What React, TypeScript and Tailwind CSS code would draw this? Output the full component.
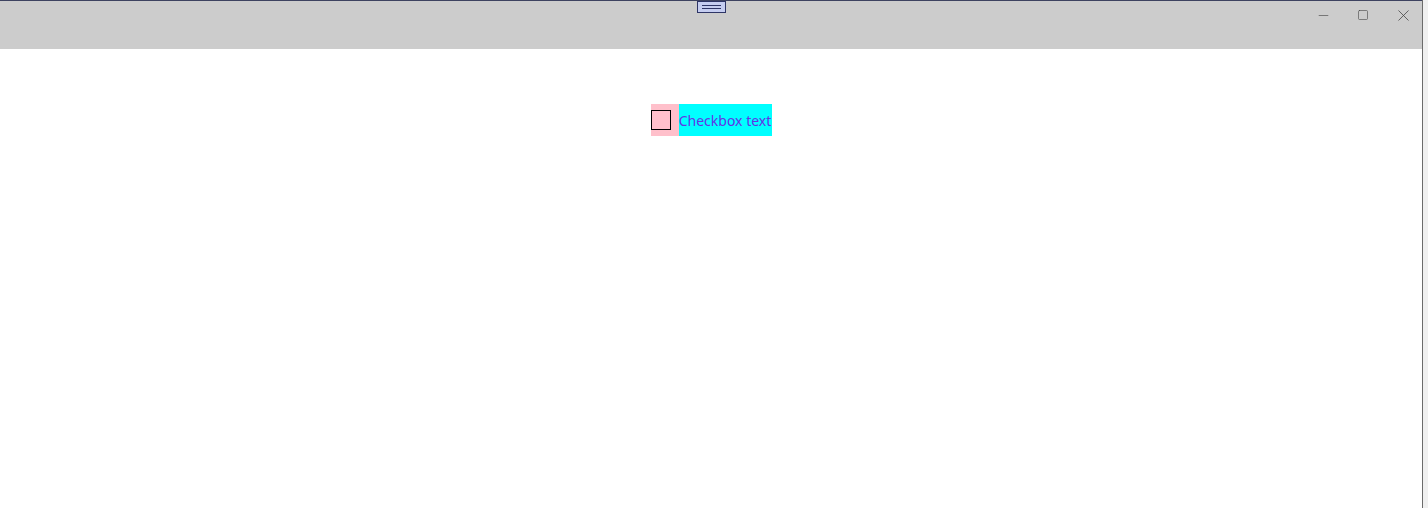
import { Minus, Square, X } from "lucide-react";

export default function App() {
  return (
    <div className="flex h-[508px] w-full overflow-hidden bg-[#f0f0f0] font-['Noto_Sans',sans-serif]">
      <div className="flex w-[1423px] shrink-0 flex-col border-r border-[#6b6b6b] bg-white">
        <div className="h-px w-full bg-[#3d4260]" />
        <div className="relative flex h-[48px] items-start justify-end bg-[#cccccc]">
          {/* drag handle */}
          <div className="absolute left-[697px] top-0 flex h-[12px] w-[29px] flex-col items-center justify-center gap-[2px] border border-[#2e3566] bg-[#c5cdf0]">
            <div className="h-px w-[19px] bg-[#2e3566]" />
            <div className="h-px w-[19px] bg-[#2e3566]" />
          </div>
          <div className="flex h-[28px] items-center text-[#444]">
            <button className="flex h-full w-[38px] items-center justify-center">
              <Minus size={15} strokeWidth={1} />
            </button>
            <button className="flex h-full w-[42px] items-center justify-center">
              <Square size={12} strokeWidth={1.2} />
            </button>
            <button className="flex h-full w-[38px] items-center justify-center">
              <X size={19} strokeWidth={1} />
            </button>
          </div>
        </div>
        <div className="flex flex-1 justify-center pt-[55px]">
          <label className="ml-[1px] flex h-[32px] items-stretch self-start">
            <span className="flex w-[28px] items-center bg-[#ffc0cb]">
              <span className="h-[20px] w-[20px] border-[1.5px] border-black bg-[#ffc0cb]" />
            </span>
            <span className="flex items-center bg-[#00ffff] pr-[1px] text-[14px] text-[#6234e6]">
              Checkbox text
            </span>
          </label>
        </div>
      </div>
    </div>
  );
}
